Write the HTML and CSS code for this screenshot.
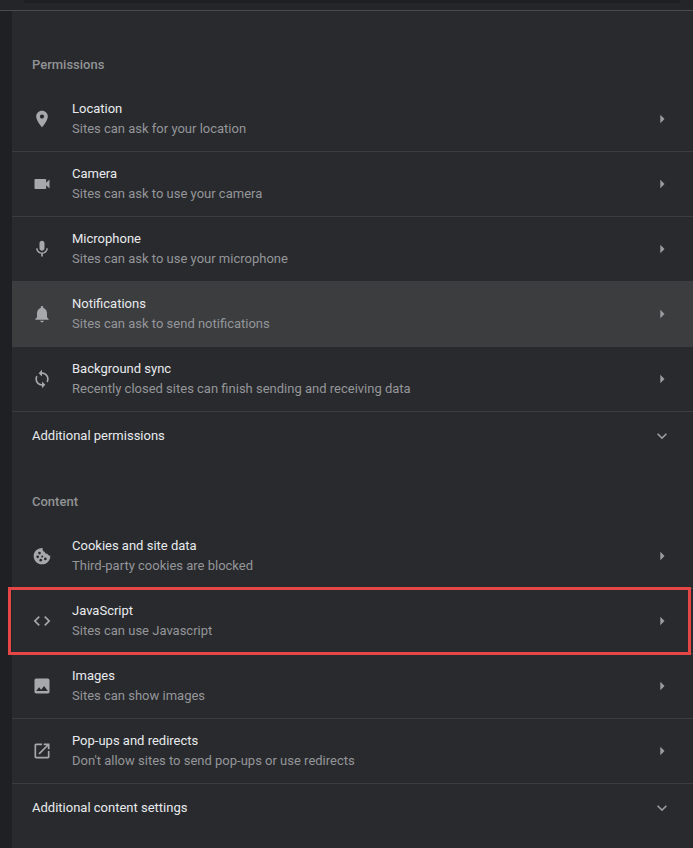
FILE: index.html
```html
<!DOCTYPE html>
<html lang="en">

<head>
    <meta charset="UTF-8" />
    <title>Site settings</title>
    <link rel="stylesheet" href="styles.css">
</head>

<body>
    <div class="topStrip">
        <div class="topBand"></div>
    </div>
    <div class="card">
        <h2 class="sectionTitle first">Permissions</h2>

        <div class="row noBorder">
            <svg class="icon" viewBox="0 0 24 24"><path d="M12 2C8.13 2 5 5.13 5 9c0 5.25 7 13 7 13s7-7.75 7-13c0-3.87-3.13-7-7-7zm0 9.5c-1.38 0-2.5-1.12-2.5-2.5s1.12-2.5 2.5-2.5 2.5 1.12 2.5 2.5-1.12 2.5-2.5 2.5z" /></svg>
            <div class="text">
                <div class="title">Location</div>
                <div class="sub">Sites can ask for your location</div>
            </div>
            <svg class="arrow" viewBox="0 0 24 24"><path d="M10 7l5 5-5 5z" /></svg>
        </div>

        <div class="row">
            <svg class="icon" viewBox="0 0 24 24"><path d="M17 10.5V7c0-.55-.45-1-1-1H4c-.55 0-1 .45-1 1v10c0 .55.45 1 1 1h12c.55 0 1-.45 1-1v-3.5l4 4v-11l-4 4z" /></svg>
            <div class="text">
                <div class="title">Camera</div>
                <div class="sub">Sites can ask to use your camera</div>
            </div>
            <svg class="arrow" viewBox="0 0 24 24"><path d="M10 7l5 5-5 5z" /></svg>
        </div>

        <div class="row">
            <svg class="icon" viewBox="0 0 24 24"><path d="M12 14c1.66 0 2.99-1.34 2.99-3L15 5c0-1.66-1.34-3-3-3S9 3.34 9 5v6c0 1.66 1.34 3 3 3zm5.3-3c0 3-2.54 5.1-5.3 5.1S6.7 14 6.7 11H5c0 3.41 2.72 6.23 6 6.72V21h2v-3.28c3.28-.48 6-3.3 6-6.72h-1.7z" /></svg>
            <div class="text">
                <div class="title">Microphone</div>
                <div class="sub">Sites can ask to use your microphone</div>
            </div>
            <svg class="arrow" viewBox="0 0 24 24"><path d="M10 7l5 5-5 5z" /></svg>
        </div>

        <div class="row hovered">
            <svg class="icon" viewBox="0 0 24 24"><path d="M12 22c1.1 0 2-.9 2-2h-4c0 1.1.9 2 2 2zm6-6v-5c0-3.07-1.63-5.64-4.5-6.32V4c0-.83-.67-1.5-1.5-1.5s-1.5.67-1.5 1.5v.68C7.64 5.36 6 7.92 6 11v5l-2 2v1h16v-1l-2-2z" /></svg>
            <div class="text">
                <div class="title">Notifications</div>
                <div class="sub">Sites can ask to send notifications</div>
            </div>
            <svg class="arrow" viewBox="0 0 24 24"><path d="M10 7l5 5-5 5z" /></svg>
        </div>

        <div class="row">
            <svg class="icon" viewBox="0 0 24 24"><path d="M12 4V1L8 5l4 4V6c3.31 0 6 2.69 6 6 0 1.01-.25 1.97-.7 2.8l1.46 1.46C19.54 15.03 20 13.57 20 12c0-4.42-3.58-8-8-8zm0 14c-3.31 0-6-2.69-6-6 0-1.01.25-1.97.7-2.8L5.24 7.74C4.46 8.97 4 10.43 4 12c0 4.42 3.58 8 8 8v3l4-4-4-4v3z" /></svg>
            <div class="text">
                <div class="title">Background sync</div>
                <div class="sub">Recently closed sites can finish sending and receiving data</div>
            </div>
            <svg class="arrow" viewBox="0 0 24 24"><path d="M10 7l5 5-5 5z" /></svg>
        </div>

        <div class="moreRow">
            <div class="title">Additional permissions</div>
            <svg class="arrow" viewBox="0 0 24 24"><path d="M16.59 8.59L12 13.17 7.41 8.59 6 10l6 6 6-6z" /></svg>
        </div>

        <h2 class="sectionTitle">Content</h2>

        <div class="row noBorder">
            <svg class="icon" viewBox="0 0 24 24">
                <path d="M21.9 11.6c-1.6.2-2.9-.7-3.3-2.2-1.6.3-3.2-.9-3.4-2.5-1.7-.2-2.9-1.9-2.4-4.6C7 1.9 2 6.4 2 12c0 5.5 4.5 10 10 10 5.8 0 10.3-4.8 9.9-10.4z" />
                <circle class="hole" cx="9" cy="8.5" r="1.6" />
                <circle class="hole" cx="6.8" cy="13" r="1.6" />
                <circle class="hole" cx="12.2" cy="12.5" r="1.2" />
                <circle class="hole" cx="10.5" cy="17" r="1.6" />
                <circle class="hole" cx="16" cy="15.5" r="1.6" />
            </svg>
            <div class="text">
                <div class="title">Cookies and site data</div>
                <div class="sub">Third-party cookies are blocked</div>
            </div>
            <svg class="arrow" viewBox="0 0 24 24"><path d="M10 7l5 5-5 5z" /></svg>
        </div>

        <div class="row marked">
            <svg class="icon" viewBox="0 0 24 24"><path d="M9.4 16.6L4.8 12l4.6-4.6L8 6l-6 6 6 6 1.4-1.4zm5.2 0l4.6-4.6-4.6-4.6L16 6l6 6-6 6-1.4-1.4z" /></svg>
            <div class="text">
                <div class="title">JavaScript</div>
                <div class="sub">Sites can use Javascript</div>
            </div>
            <svg class="arrow" viewBox="0 0 24 24"><path d="M10 7l5 5-5 5z" /></svg>
            <div class="redBox"></div>
        </div>

        <div class="row">
            <svg class="icon" viewBox="0 0 24 24"><path d="M21 19V5c0-1.1-.9-2-2-2H5c-1.1 0-2 .9-2 2v14c0 1.1.9 2 2 2h14c1.1 0 2-.9 2-2zM8.5 13.5l2.5 3.01L14.5 12l4.5 6H5l3.5-4.5z" /></svg>
            <div class="text">
                <div class="title">Images</div>
                <div class="sub">Sites can show images</div>
            </div>
            <svg class="arrow" viewBox="0 0 24 24"><path d="M10 7l5 5-5 5z" /></svg>
        </div>

        <div class="row">
            <svg class="icon" viewBox="0 0 24 24"><path d="M19 19H5V5h7V3H5c-1.11 0-2 .9-2 2v14c0 1.1.89 2 2 2h14c1.1 0 2-.9 2-2v-7h-2v7zM14 3v2h3.59l-9.83 9.83 1.41 1.41L19 6.41V10h2V3h-7z" /></svg>
            <div class="text">
                <div class="title">Pop-ups and redirects</div>
                <div class="sub">Don't allow sites to send pop-ups or use redirects</div>
            </div>
            <svg class="arrow" viewBox="0 0 24 24"><path d="M10 7l5 5-5 5z" /></svg>
        </div>

        <div class="moreRow">
            <div class="title">Additional content settings</div>
            <svg class="arrow" viewBox="0 0 24 24"><path d="M16.59 8.59L12 13.17 7.41 8.59 6 10l6 6 6-6z" /></svg>
        </div>
    </div>
</body>

</html>
```

FILE: styles.css
```css
html,
body {
    height: 100%;
}

body {
    margin: 0;
    overflow: hidden;
    font-family: Roboto, "Liberation Sans", sans-serif;
    font-size: 13px;
    line-height: 20px;
    background-color: #1f2023;
}

.topStrip {
    height: 10px;
    background-color: #242528;
    border-bottom: 1px solid #4a4b4d;
}

.topBand {
    height: 3px;
    margin: 0 13px 0 24px;
    background-color: #1e1f21;
}

.card {
    margin-left: 12px;
    height: 837px;
    background-color: #292a2d;
}

.sectionTitle {
    margin: 0;
    padding: 33px 20px 11px;
    font-size: 13px;
    line-height: 20px;
    font-weight: 500;
    color: #919396;
}

.sectionTitle.first {
    padding-top: 44px;
}

.row {
    position: relative;
    display: flex;
    align-items: center;
    height: 64px;
    padding: 0 21px 0 20px;
    border-top: 1px solid #3c3d40;
}

.row.noBorder {
    height: 65px;
    border-top: none;
}

.row.hovered {
    background-color: #3c3d3f;
}

.moreRow {
    display: flex;
    align-items: center;
    height: 47px;
    padding: 0 21px 0 20px;
    border-top: 1px solid #3c3d40;
}

.icon {
    width: 20px;
    height: 20px;
    flex: none;
    margin-right: 20px;
    fill: #a6a8ab;
}

.icon .hole {
    fill: #292a2d;
}

.text {
    flex: 1;
}

.title {
    flex: 1;
    color: #e8eaed;
}

.sub {
    color: #94969a;
}

.arrow {
    width: 20px;
    height: 20px;
    flex: none;
    fill: #9a9c9f;
}

.redBox {
    position: absolute;
    z-index: 1;
    top: -2px;
    bottom: -2px;
    left: -4px;
    right: 2px;
    border: 3px solid #e64646;
}
```
